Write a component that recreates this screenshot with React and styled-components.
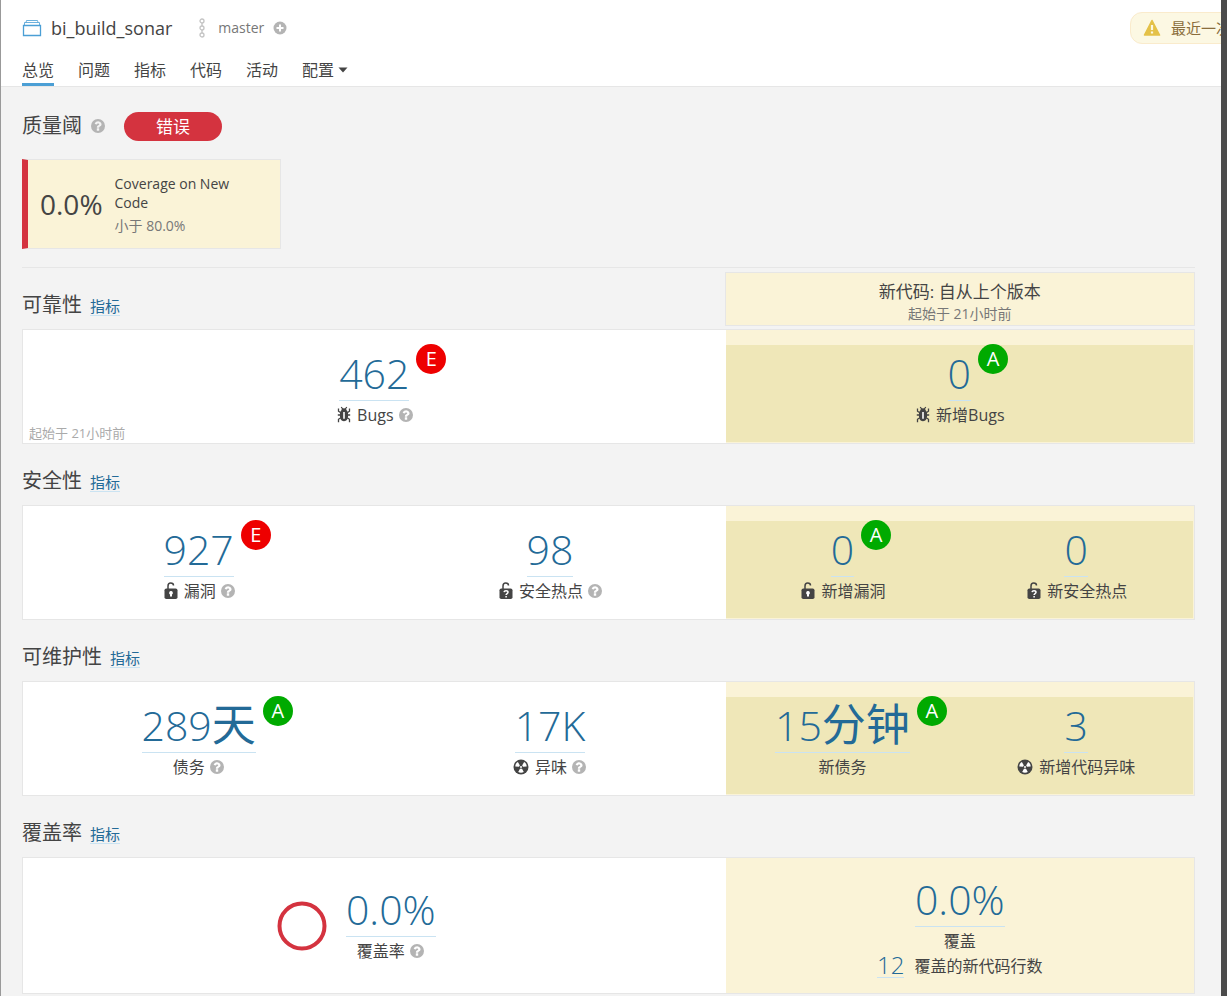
import React from 'react';
import styled, {createGlobalStyle} from 'styled-components';

const GlobalStyle = createGlobalStyle`
  * {
    box-sizing: border-box;
  }
  body {
    margin: 0;
    background: #f3f3f3;
    color: #444;
    font-family: 'Open Sans', 'Noto Sans CJK SC', sans-serif;
    font-size: 16px;
    line-height: 24px;
  }
  h1, h2, p {
    margin: 0;
    font-weight: 400;
  }
  a {
    color: #236a97;
    text-decoration: none;
  }
  svg {
    display: block;
    flex: none;
  }
`;

const Page = styled.div`
  min-height: 100vh;
  overflow: hidden;
  border-left: 1px solid #999;
  border-right: 6px solid #4b4b4b;
`;

const Header = styled.header`
  padding: 12px 0 0 21px;
  background: #fff;
  border-bottom: 1px solid #e6e6e6;
  overflow: hidden;
`;

const TitleBar = styled.div`
  display: flex;
  align-items: center;
  height: 32px;
`;

const ProjectName = styled.h1`
  margin: 0 26px 0 9px;
  font-size: 18px;
`;

const Branch = styled.span`
  margin: 0 9px 0 12px;
  color: #777;
  font-size: 14px;
`;

const IconButton = styled.button`
  padding: 0;
  border: 0;
  background: none;
`;

const Warning = styled.div`
  display: flex;
  align-items: center;
  flex: none;
  gap: 10px;
  height: 32px;
  margin: 0 -24px 0 auto;
  padding: 0 13px 0 12px;
  border: 1px solid #faebcc;
  border-radius: 12px;
  background: #fcf8e3;
  color: #8a6d3b;
  font-size: 15px;
`;

const Nav = styled.nav`
  display: flex;
  gap: 24px;
  margin-top: 14px;
`;

const NavLink = styled.a`
  display: flex;
  align-items: center;
  gap: 4px;
  height: 28px;
  padding-bottom: 1px;
  border-bottom: 3px solid ${props => (props.$active ? '#4b9fd5' : 'transparent')};
  color: #444;
`;

const Main = styled.main`
  padding: 24px 26px 24px 21px;
`;

const GateHeader = styled.div`
  display: flex;
  align-items: center;
  gap: 8px;
  height: 30px;
`;

const SectionTitle = styled.h2`
  font-size: 20px;
`;

const GateStatus = styled.span`
  margin-left: 10px;
  padding: 0 32px;
  border-radius: 15px;
  background: #d4333f;
  color: #fff;
  font-size: 17px;
  line-height: 29px;
`;

const Condition = styled.a`
  display: flex;
  align-items: center;
  gap: 12px;
  width: 259px;
  height: 90px;
  margin: 18px 0;
  padding-left: 12px;
  border: 1px solid #e6e6e6;
  border-left: 6px solid #d4333f;
  background: #faf3d7;
  color: #444;
`;

const ConditionValue = styled.span`
  font-size: 28px;
`;

const ConditionText = styled.span`
  width: 132px;
  font-size: 14px;
  line-height: 19px;
`;

const ConditionLimit = styled.small`
  display: block;
  margin-top: 4px;
  color: #777;
  font-size: 14px;
`;

const Split = styled.div`
  display: flex;
  border-top: ${props => (props.$divider ? '1px solid #e6e6e6' : '0')};
`;

const SectionHeader = styled.div`
  display: flex;
  flex: 6;
  align-items: baseline;
  gap: 8px;
  height: 61px;
  padding-top: 25px;
`;

const DetailLink = styled.a`
  border-bottom: 1px solid #cae3f2;
  font-size: 15px;
  line-height: 18px;
`;

const Legend = styled.div`
  flex: 4;
  height: 54px;
  margin-top: 4px;
  padding-top: 7px;
  border: 1px solid #e6e6e6;
  background: #faf3d7;
  text-align: center;
  font-size: 17px;
  line-height: 24px;
`;

const LegendDate = styled.p`
  color: #777;
  font-size: 14px;
  line-height: 20px;
`;

const Card = styled.div`
  display: grid;
  grid-template-columns: minmax(0, 6fr) minmax(0, 4fr);
  border: 1px solid #e6e6e6;
  background: #fff;
`;

const Side = styled.div`
  position: relative;
  display: flex;
  justify-content: center;
  background: ${props => (props.$leak ? '#faf3d7' : '#fff')};
`;

const LeakSide = styled(Side)`
  border-top: 15px solid #faf3d7;
  border-right: 1px solid #faf3d7;
  border-bottom: 1px solid #faf3d7;
  background: #efe7b8;
`;

const CoverageSide = styled(Side)`
  align-items: center;
  gap: 19px;
  padding-right: 36px;
`;

const Measure = styled.div`
  display: flex;
  flex: 1;
  flex-direction: column;
  align-items: center;
  padding: ${props => (props.$leak ? '3px 0 15px' : '18px 0 16px')};
`;

const CoverageMeasure = styled.div`
  display: flex;
  flex-direction: column;
  align-items: center;
  padding: ${props => (props.$leak ? '16px 0 15px' : '0 0 4px')};
`;

const ValueBox = styled.div`
  position: relative;
`;

const Value = styled.a`
  display: block;
  padding-bottom: 2px;
  border-bottom: 1px solid #cae3f2;
  font-size: 41px;
  font-weight: 300;
  line-height: 50px;
`;

const Unit = styled.span`
  font-size: 44px;
  font-weight: 400;
  line-height: 1;
`;

const Rating = styled.a`
  position: absolute;
  top: -4px;
  left: 100%;
  width: 30px;
  height: 30px;
  margin-left: 7px;
  border-radius: 50%;
  background: ${props => (props.$level === 'A' ? '#0a0' : '#e00')};
  color: #fff;
  text-align: center;
  font-size: 20px;
  line-height: 30px;
`;

const Label = styled.div`
  display: flex;
  align-items: center;
  margin-top: 2px;
`;

const LabelText = styled.span`
  margin-right: ${props => (props.$help ? '4px' : '0')};
`;

const LabelIcon = styled.span`
  margin-right: 6px;
`;

const Since = styled.span`
  position: absolute;
  bottom: 0;
  left: 6px;
  color: #aaa;
  font-size: 13px;
  line-height: 20px;
`;

const Lines = styled.div`
  display: flex;
  align-items: center;
  gap: 10px;
`;

const LinesValue = styled.a`
  border-bottom: 1px solid #cae3f2;
  font-size: 24px;
  font-weight: 300;
`;

const HELP_MARK =
  'M9.2 12.4v-1.8a.3.3 0 0 0-.3-.3H7.1a.3.3 0 0 0-.3.3v1.8c0 .2.1.3.3.3h1.8c.2 0 .3-.1.3-.3zM11.5 6.3c0-.6-.2-1-.5-1.5a3.3 3.3 0 0 0-1.3-1.1 3.5 3.5 0 0 0-1.5-.4c-1.5 0-2.6.7-3.4 2-.1.1-.1.3.1.4l1.2.9c.1.1.3.1.4-.1.3-.4.6-.7.8-.8.2-.2.5-.2.8-.2s.5.1.8.2c.2.2.3.3.3.5 0 .3-.1.5-.2.6-.1.1-.3.3-.6.4-.4.2-.7.4-1 .8-.4.3-.5.7-.5 1.1v.3c0 .2.1.3.3.3h1.7c.2 0 .3-.1.3-.3 0-.1.1-.3.2-.4.1-.2.3-.4.5-.5l.4-.3.5-.3.4-.4c.1-.2.2-.3.2-.5.1-.2.1-.4.1-.7z';

function HelpIcon() {
  return (
    <svg width="16" height="16" viewBox="0 0 16 16" aria-hidden="true">
      <path
        fill="#b4b4b4"
        fillRule="evenodd"
        d={'M15 8A7 7 0 1 1 1 8a7 7 0 1 1 14 0z' + HELP_MARK}
      />
    </svg>
  );
}

function ProjectIcon() {
  return (
    <svg width="20" height="18" viewBox="0 0 20 18" fill="none" stroke="#4b9fd5">
      <path d="M1.500 6.500h17v10h-17z" strokeWidth="1.300" />
      <path d="M2.500 6V3.500h15V6M4 3.500l.5-2h11l.5 2" opacity="0.8" />
    </svg>
  );
}

function BranchIcon() {
  return (
    <svg width="8" height="20" viewBox="0 0 8 20" fill="none" stroke="#c4c4c4" strokeWidth="1.300">
      <circle cx="4" cy="3" r="2" />
      <circle cx="4" cy="10" r="2" />
      <circle cx="4" cy="17" r="2" />
      <path d="M4 5v3M4 12v3" />
    </svg>
  );
}

function PlusIcon() {
  return (
    <svg width="14" height="14" viewBox="0 0 14 14">
      <circle cx="7" cy="7" r="6.500" fill="#b4b4b4" />
      <path d="M7 3.500v7M3.500 7h7" stroke="#fff" strokeWidth="2" />
    </svg>
  );
}

function WarningIcon() {
  return (
    <svg width="18" height="18" viewBox="0 0 18 18">
      <path
        d="M9 1.500L16.500 16h-15z"
        fill="#e4c148"
        stroke="#e4c148"
        strokeWidth="1.600"
        strokeLinejoin="round"
      />
      <path d="M9 6v5M9 12.500v2" stroke="#fcf8e3" strokeWidth="2.200" />
    </svg>
  );
}

function CaretIcon() {
  return (
    <svg width="10" height="6" viewBox="0 0 10 6">
      <path d="M.5.5h9L5 5.500z" fill="#444" />
    </svg>
  );
}

function BugIcon() {
  return (
    <svg width="16" height="18" viewBox="-2 0 16 18" fill="none" stroke="#444">
      <path d="M4.200 1l1.600 2.200M9.800 1L8.200 3.200" strokeWidth="1.200" />
      <path
        d="M1.500 2.500v2.700l2.300 1.600M12.500 2.500v2.700l-2.300 1.600M.8 9h3M10.200 9h3M1.500 16.300v-3l2.300-1.500M12.500 16.300v-3l-2.300-1.500"
        strokeWidth="1.300"
      />
      <path
        d="M7 2.200c1.800 0 2.500.9 2.600 2 1 .7 1.500 2.400 1.500 4.900 0 3.900-1.300 6.100-4.100 6.100S2.900 13 2.900 9.100c0-2.500.5-4.200 1.500-4.900.1-1.100.8-2 2.600-2z"
        fill="#444"
        stroke="none"
      />
      <path d="M7 6v6.800" stroke="#fff" strokeWidth="1.600" />
    </svg>
  );
}

function LockIcon({hotspot}) {
  return (
    <svg width="16" height="18" viewBox="-2 0 16 18" fill="none">
      <rect x="0.500" y="6.500" width="13" height="10.500" rx="1.800" fill="#444" />
      <path d="M4 7V4C4 2.100 5 1 6.700 1S9.500 2.100 9.500 3.500" stroke="#444" strokeWidth="1.500" />
      {hotspot ? (
        <path
          d="M5 10.200c.2-1 .9-1.500 2-1.500s2 .6 2 1.600c0 1.300-1.900 1.200-1.900 2.600M7.100 13.900v1.600"
          stroke="#fff"
          strokeWidth="1.500"
        />
      ) : (
        <path d="M7 9a1.900 1.900 0 0 1 1 3.500v2H6v-2A1.900 1.900 0 0 1 7 9z" fill="#fff" />
      )}
    </svg>
  );
}

function SmellIcon() {
  return (
    <svg width="16" height="16" viewBox="0 0 16 16">
      <circle cx="8" cy="8" r="7.500" fill="#444" />
      <path
        d="M2.300 7.600c0-2.200 1-3.700 2.600-4.600l2 3.500c-.5.300-.7.700-.8 1.300zM13.700 7.600c0-2.200-1-3.700-2.600-4.600l-2 3.500c.5.300.7.700.8 1.300zM5.200 13l1.900-3.400c.6.300 1.200.3 1.800 0l1.900 3.400c-1.700 1-3.900 1-5.600 0z"
        fill="#fff"
      />
      <circle cx="8" cy="7.900" r="1" fill="#fff" />
    </svg>
  );
}

const icons = {
  bug: <BugIcon />,
  lock: <LockIcon />,
  hotspot: <LockIcon hotspot />,
  smell: <SmellIcon />,
};

const sections = [
  {
    title: '可靠性',
    since: '起始于 21小时前',
    overall: [{value: '462', rating: 'E', icon: 'bug', label: 'Bugs', help: true}],
    leak: [{value: '0', rating: 'A', icon: 'bug', label: '新增Bugs'}],
  },
  {
    title: '安全性',
    overall: [
      {value: '927', rating: 'E', icon: 'lock', label: '漏洞', help: true},
      {value: '98', icon: 'hotspot', label: '安全热点', help: true},
    ],
    leak: [
      {value: '0', rating: 'A', icon: 'lock', label: '新增漏洞'},
      {value: '0', icon: 'hotspot', label: '新安全热点'},
    ],
  },
  {
    title: '可维护性',
    overall: [
      {value: '289', unit: '天', rating: 'A', label: '债务', help: true},
      {value: '17K', icon: 'smell', label: '异味', help: true},
    ],
    leak: [
      {value: '15', unit: '分钟', rating: 'A', label: '新债务'},
      {value: '3', icon: 'smell', label: '新增代码异味'},
    ],
  },
];

function MeasureItem({item, leak}) {
  return (
    <Measure $leak={leak}>
      <ValueBox>
        <Value href="#">
          {item.value}
          {item.unit && <Unit>{item.unit}</Unit>}
        </Value>
        {item.rating && (
          <Rating href="#" $level={item.rating}>
            {item.rating}
          </Rating>
        )}
      </ValueBox>
      <Label>
        {item.icon && <LabelIcon>{icons[item.icon]}</LabelIcon>}
        <LabelText $help={item.help}>{item.label}</LabelText>
        {item.help && <HelpIcon />}
      </Label>
    </Measure>
  );
}

function Heading({title}) {
  return (
    <SectionHeader>
      <SectionTitle>{title}</SectionTitle>
      <DetailLink href="#">指标</DetailLink>
    </SectionHeader>
  );
}

export default function App() {
  return (
    <Page>
      <GlobalStyle />
      <Header>
        <TitleBar>
          <ProjectIcon />
          <ProjectName>bi_build_sonar</ProjectName>
          <BranchIcon />
          <Branch>master</Branch>
          <IconButton type="button">
            <PlusIcon />
          </IconButton>
          <Warning>
            <WarningIcon />
            最近一次
          </Warning>
        </TitleBar>
        <Nav>
          {['总览', '问题', '指标', '代码', '活动'].map((item, index) => (
            <NavLink key={item} href="#" $active={index === 0}>
              {item}
            </NavLink>
          ))}
          <NavLink href="#">
            配置
            <CaretIcon />
          </NavLink>
        </Nav>
      </Header>
      <Main>
        <GateHeader>
          <SectionTitle>质量阈</SectionTitle>
          <IconButton type="button">
            <HelpIcon />
          </IconButton>
          <GateStatus>错误</GateStatus>
        </GateHeader>
        <Condition href="#">
          <ConditionValue>0.0%</ConditionValue>
          <ConditionText>
            Coverage on New Code
            <ConditionLimit>小于 80.0%</ConditionLimit>
          </ConditionText>
        </Condition>
        {sections.map((section, index) => (
          <section key={section.title}>
            <Split $divider={index === 0}>
              <Heading title={section.title} />
              {index === 0 && (
                <Legend>
                  新代码: 自从上个版本
                  <LegendDate>起始于 21小时前</LegendDate>
                </Legend>
              )}
            </Split>
            <Card>
              <Side>
                {section.overall.map(item => (
                  <MeasureItem key={item.label} item={item} />
                ))}
                {section.since && <Since>{section.since}</Since>}
              </Side>
              <LeakSide $leak>
                {section.leak.map(item => (
                  <MeasureItem key={item.label} item={item} leak />
                ))}
              </LeakSide>
            </Card>
          </section>
        ))}
        <section>
          <Heading title="覆盖率" />
          <Card>
            <CoverageSide>
              <svg width="50" height="50" viewBox="0 0 50 50">
                <circle cx="25" cy="25" r="22.500" fill="none" stroke="#d4333f" strokeWidth="4" />
              </svg>
              <CoverageMeasure>
                <Value href="#">0.0%</Value>
                <Label>
                  <LabelText $help>覆盖率</LabelText>
                  <HelpIcon />
                </Label>
              </CoverageMeasure>
            </CoverageSide>
            <Side $leak>
              <CoverageMeasure $leak>
                <Value href="#">0.0%</Value>
                <Label>覆盖</Label>
                <Lines>
                  <LinesValue href="#">12</LinesValue>
                  覆盖的新代码行数
                </Lines>
              </CoverageMeasure>
            </Side>
          </Card>
        </section>
      </Main>
    </Page>
  );
}
